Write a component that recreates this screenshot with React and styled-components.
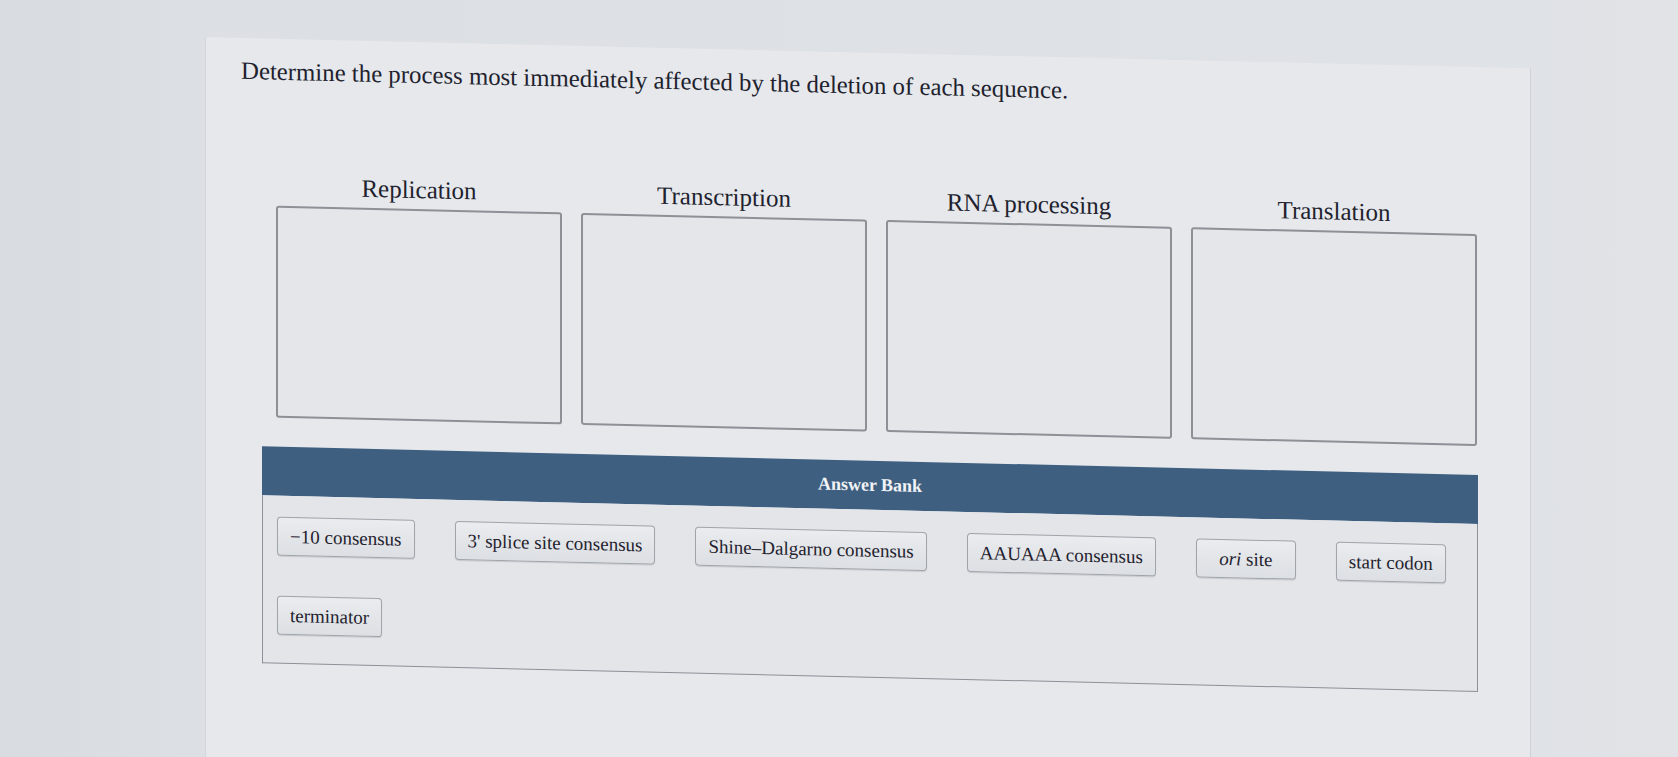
import React from 'react'
import styled, { createGlobalStyle } from 'styled-components'

const categories = ['Replication', 'Transcription', 'RNA processing', 'Translation']

const answers = [
    { id: 'minus10', label: '\u221210 consensus' },
    { id: 'splice3', label: "3' splice site consensus" },
    { id: 'sd', label: 'Shine\u2013Dalgarno consensus' },
    { id: 'aauaaa', label: 'AAUAAA consensus' },
    { id: 'ori', label: <><i>ori</i> site</> },
    { id: 'start', label: 'start codon' },
    { id: 'term', label: 'terminator' },
]

class App extends React.Component {
    render() {
        return (
            <>
                <GlobalStyle />
                <Page>
                    <Panel>
                        <Prompt>Determine the process most immediately affected by the deletion of each sequence.</Prompt>
                        <Workspace>
                            <Columns>
                                {categories.map(name => (
                                    <Category key={name}>
                                        <CategoryLabel>{name}</CategoryLabel>
                                        <DropZone />
                                    </Category>
                                ))}
                            </Columns>
                            <Bank>
                                <BankHeader>Answer Bank</BankHeader>
                                <BankBody>
                                    {answers.map(a => (
                                        <Chip key={a.id}>{a.label}</Chip>
                                    ))}
                                </BankBody>
                            </Bank>
                        </Workspace>
                    </Panel>
                </Page>
            </>
        )
    }
}

const GlobalStyle = createGlobalStyle`
    html, body {
        margin: 0;
        padding: 0;
        height: 100%;
    }
    body {
        background: #dcdfe3;
        font-family: "Liberation Serif", "Times New Roman", serif;
        color: #221f2e;
        overflow: hidden;
    }
`;

const Page = styled.div`
    height: 757px;
    box-sizing: border-box;
    padding: 37px 0 0 205px;
    overflow: hidden;
    background: linear-gradient(90deg, #d8dbe0 0, #dcdfe3 205px, #dfe2e6 1531px, #e1e3e7 100%);
`;

const Panel = styled.div`
    width: 1326px;
    height: 820px;
    box-sizing: border-box;
    padding: 18px 0 0 35px;
    background: #e6e8ec;
    border-left: 1px solid #d2d5da;
    border-right: 1px solid #cfd2d7;
    transform: skewY(1.35deg);
    transform-origin: 0 0;
`;

const Prompt = styled.p`
    margin: 0;
    font-size: 24.8px;
    line-height: 30px;
`;

const Workspace = styled.div`
    width: 1216px;
    margin: 86px 0 0 21px;
`;

const Columns = styled.div`
    display: grid;
    grid-template-columns: repeat(4, 1fr);
    column-gap: 19px;
    margin: 0 1px 0 14px;
`;

const Category = styled.div`
    display: flex;
    flex-direction: column;
    align-items: center;
`;

const CategoryLabel = styled.div`
    font-size: 25px;
    line-height: 28px;
    margin-bottom: 5px;
`;

const DropZone = styled.div`
    width: 100%;
    height: 212px;
    box-sizing: border-box;
    border: 2px solid #8d9096;
    border-radius: 3px;
    background: #e4e6ea;
`;

const Bank = styled.div`
    margin-top: 29px;
`;

const BankHeader = styled.div`
    height: 49px;
    display: flex;
    align-items: center;
    justify-content: center;
    background: #3e5f80;
    color: #f1f3f6;
    font-size: 18px;
    font-weight: bold;
`;

const BankBody = styled.div`
    min-height: 168px;
    box-sizing: border-box;
    display: flex;
    flex-wrap: wrap;
    align-content: flex-start;
    column-gap: 40px;
    row-gap: 40px;
    padding: 21px 14px 24px;
    border: 1px solid #8c9098;
    border-top: none;
    background: #e3e5e9;
`;

const Chip = styled.div`
    min-width: 100px;
    box-sizing: border-box;
    padding: 8px 12px;
    text-align: center;
    font-size: 19px;
    line-height: 21px;
    color: #24222e;
    border: 1px solid #a0a4ab;
    border-radius: 4px;
    background: linear-gradient(#eaecef, #dcdfe3);
    box-shadow: 0 1px 1px rgba(0, 0, 0, 0.12);

    i {
        font-style: italic;
    }
`;

export default App;
